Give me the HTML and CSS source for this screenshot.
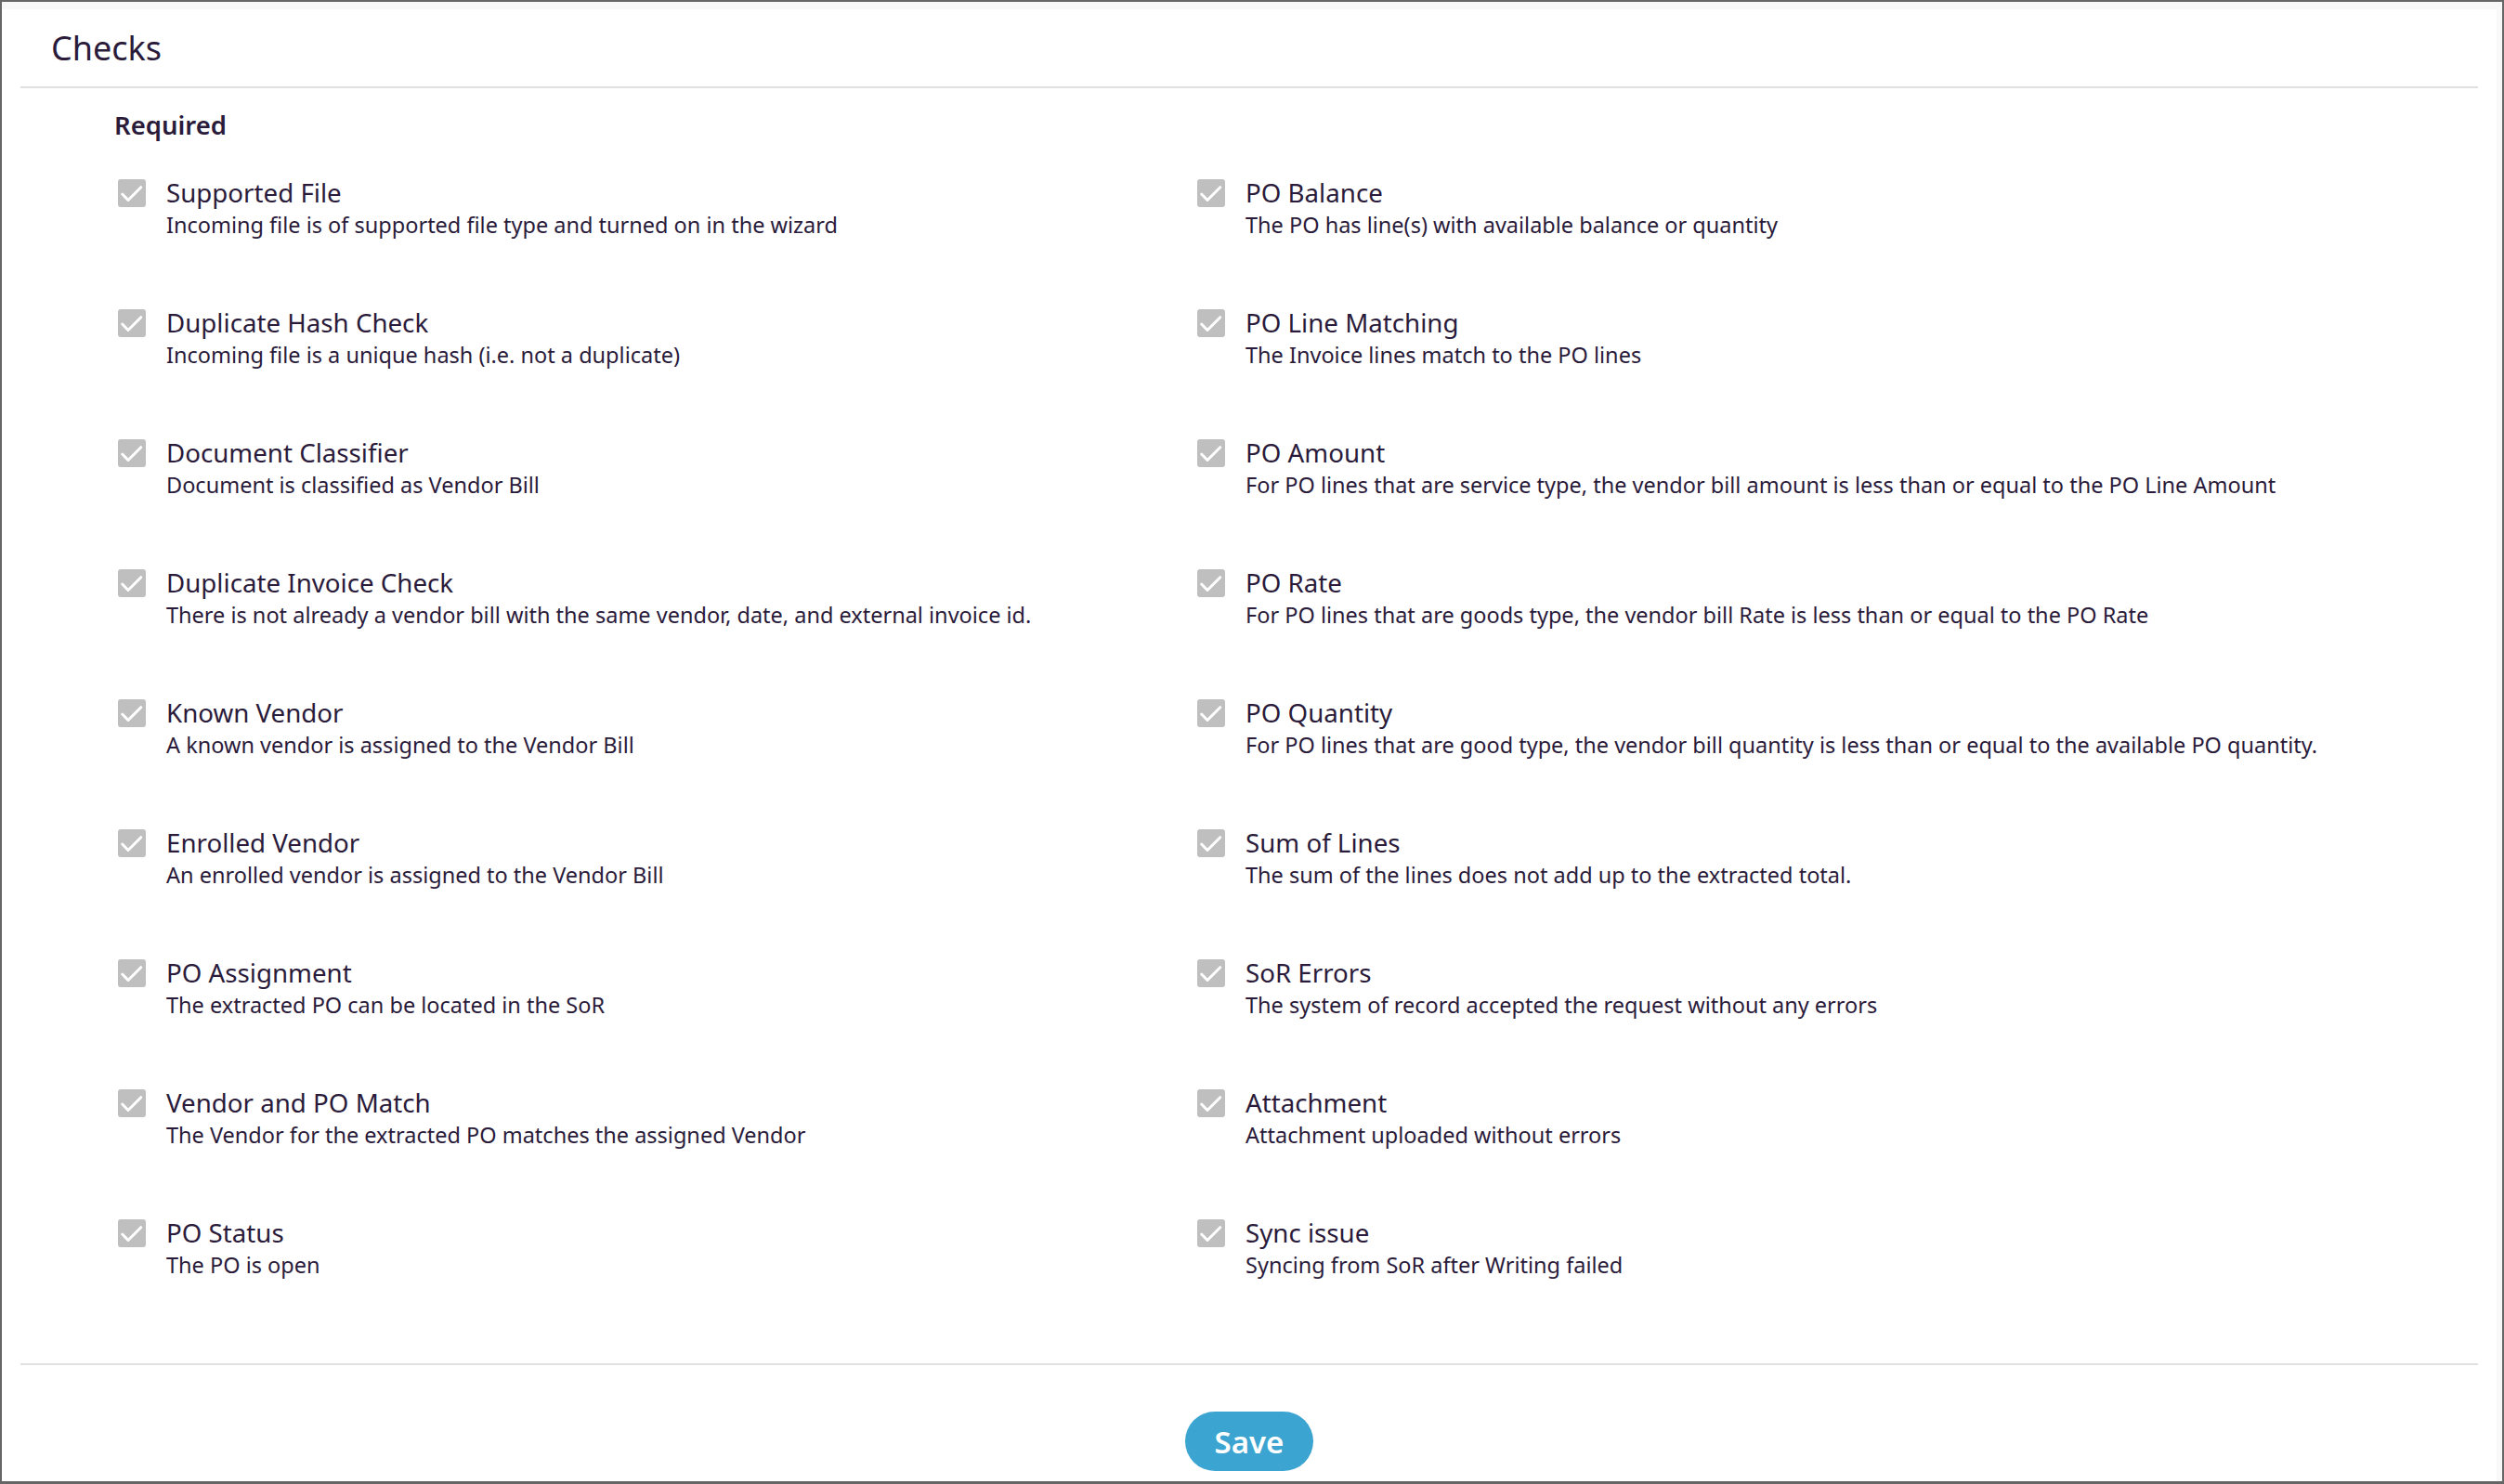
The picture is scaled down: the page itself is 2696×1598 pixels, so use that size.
FILE: index.html
```html
<!DOCTYPE html>
<html lang="en">
<head>
<meta charset="utf-8">
<title>Checks</title>
<link rel="stylesheet" href="styles.css">
</head>
<body>
<div class="frame">
  <div class="panel">
    <div class="header"><h1 class="title">Checks</h1></div>
    <div class="content">
      <h2 class="section">Required</h2>
      <div class="grid">
        <div class="check"><span class="box"><svg viewBox="0 0 30 30"><polyline points="4.7,16 11,22.5 24.7,8.7"/></svg></span><div class="text"><div class="name">Supported File</div><div class="desc">Incoming file is of supported file type and turned on in the wizard</div></div></div>
        <div class="check"><span class="box"><svg viewBox="0 0 30 30"><polyline points="4.7,16 11,22.5 24.7,8.7"/></svg></span><div class="text"><div class="name">PO Balance</div><div class="desc">The PO has line(s) with available balance or quantity</div></div></div>
        <div class="check"><span class="box"><svg viewBox="0 0 30 30"><polyline points="4.7,16 11,22.5 24.7,8.7"/></svg></span><div class="text"><div class="name">Duplicate Hash Check</div><div class="desc">Incoming file is a unique hash (i.e. not a duplicate)</div></div></div>
        <div class="check"><span class="box"><svg viewBox="0 0 30 30"><polyline points="4.7,16 11,22.5 24.7,8.7"/></svg></span><div class="text"><div class="name">PO Line Matching</div><div class="desc">The Invoice lines match to the PO lines</div></div></div>
        <div class="check"><span class="box"><svg viewBox="0 0 30 30"><polyline points="4.7,16 11,22.5 24.7,8.7"/></svg></span><div class="text"><div class="name">Document Classifier</div><div class="desc">Document is classified as Vendor Bill</div></div></div>
        <div class="check"><span class="box"><svg viewBox="0 0 30 30"><polyline points="4.7,16 11,22.5 24.7,8.7"/></svg></span><div class="text"><div class="name">PO Amount</div><div class="desc">For PO lines that are service type, the vendor bill amount is less than or equal to the PO Line Amount</div></div></div>
        <div class="check"><span class="box"><svg viewBox="0 0 30 30"><polyline points="4.7,16 11,22.5 24.7,8.7"/></svg></span><div class="text"><div class="name">Duplicate Invoice Check</div><div class="desc">There is not already a vendor bill with the same vendor, date, and external invoice id.</div></div></div>
        <div class="check"><span class="box"><svg viewBox="0 0 30 30"><polyline points="4.7,16 11,22.5 24.7,8.7"/></svg></span><div class="text"><div class="name">PO Rate</div><div class="desc">For PO lines that are goods type, the vendor bill Rate is less than or equal to the PO Rate</div></div></div>
        <div class="check"><span class="box"><svg viewBox="0 0 30 30"><polyline points="4.7,16 11,22.5 24.7,8.7"/></svg></span><div class="text"><div class="name">Known Vendor</div><div class="desc">A known vendor is assigned to the Vendor Bill</div></div></div>
        <div class="check"><span class="box"><svg viewBox="0 0 30 30"><polyline points="4.7,16 11,22.5 24.7,8.7"/></svg></span><div class="text"><div class="name">PO Quantity</div><div class="desc">For PO lines that are good type, the vendor bill quantity is less than or equal to the available PO quantity.</div></div></div>
        <div class="check"><span class="box"><svg viewBox="0 0 30 30"><polyline points="4.7,16 11,22.5 24.7,8.7"/></svg></span><div class="text"><div class="name">Enrolled Vendor</div><div class="desc">An enrolled vendor is assigned to the Vendor Bill</div></div></div>
        <div class="check"><span class="box"><svg viewBox="0 0 30 30"><polyline points="4.7,16 11,22.5 24.7,8.7"/></svg></span><div class="text"><div class="name">Sum of Lines</div><div class="desc">The sum of the lines does not add up to the extracted total.</div></div></div>
        <div class="check"><span class="box"><svg viewBox="0 0 30 30"><polyline points="4.7,16 11,22.5 24.7,8.7"/></svg></span><div class="text"><div class="name">PO Assignment</div><div class="desc">The extracted PO can be located in the SoR</div></div></div>
        <div class="check"><span class="box"><svg viewBox="0 0 30 30"><polyline points="4.7,16 11,22.5 24.7,8.7"/></svg></span><div class="text"><div class="name">SoR Errors</div><div class="desc">The system of record accepted the request without any errors</div></div></div>
        <div class="check"><span class="box"><svg viewBox="0 0 30 30"><polyline points="4.7,16 11,22.5 24.7,8.7"/></svg></span><div class="text"><div class="name">Vendor and PO Match</div><div class="desc">The Vendor for the extracted PO matches the assigned Vendor</div></div></div>
        <div class="check"><span class="box"><svg viewBox="0 0 30 30"><polyline points="4.7,16 11,22.5 24.7,8.7"/></svg></span><div class="text"><div class="name">Attachment</div><div class="desc">Attachment uploaded without errors</div></div></div>
        <div class="check"><span class="box"><svg viewBox="0 0 30 30"><polyline points="4.7,16 11,22.5 24.7,8.7"/></svg></span><div class="text"><div class="name">PO Status</div><div class="desc">The PO is open</div></div></div>
        <div class="check"><span class="box"><svg viewBox="0 0 30 30"><polyline points="4.7,16 11,22.5 24.7,8.7"/></svg></span><div class="text"><div class="name">Sync issue</div><div class="desc">Syncing from SoR after Writing failed</div></div></div>
      </div>
    </div>
    <div class="footer"><button class="save" type="button">Save</button></div>
  </div>
</div>
</body>
</html>
```

FILE: styles.css
```css
* { box-sizing: border-box; }
html, body { margin: 0; padding: 0; }
body {
  font-family: "Noto Sans", "Open Sans", "DejaVu Sans", sans-serif;
  color: #2b1b3b;
}
.frame {
  width: 2696px;
  height: 1598px;
  border: 2px solid #666666;
  border-bottom-width: 3px;
  background: #f8f8f8;
  padding: 8px 6px 0 0;
  overflow: hidden;
}
.panel {
  background: #ffffff;
  height: 100%;
  display: flex;
  flex-direction: column;
}
.header {
  margin: 0 20px;
  padding: 18px 33px 17px;
  border-bottom: 2px solid #e0e0e0;
}
.title {
  margin: 0;
  font-size: 36px;
  line-height: 48px;
  font-weight: 400;
}
.content {
  margin: 0 20px;
  padding: 23px 0 0 101px;
  height: 1375px;
  border-bottom: 2px solid #e0e0e0;
}
.section {
  margin: 0;
  font-size: 27.5px;
  line-height: 34px;
  font-weight: 600;
}
.grid {
  margin-top: 37px;
  display: grid;
  grid-template-columns: 1162px 1fr;
  row-gap: 70px;
}
.check {
  display: flex;
  align-items: flex-start;
  gap: 22px;
  padding-left: 4px;
}
.box {
  flex: none;
  width: 30px;
  height: 30px;
  margin-top: 4px;
  border-radius: 3px;
  background: #bfbfbf;
  display: block;
}
.box svg {
  width: 30px;
  height: 30px;
  display: block;
  fill: none;
  stroke: #ffffff;
  stroke-width: 3;
  stroke-linecap: round;
  stroke-linejoin: round;
}
.name {
  font-size: 27.7px;
  line-height: 36px;
}
.desc {
  font-size: 23.5px;
  line-height: 34px;
}
.footer {
  display: flex;
  justify-content: center;
  padding-top: 50px;
}
.save {
  width: 138px;
  height: 64px;
  border: none;
  border-radius: 32px;
  background: #3ca4d1;
  color: #ffffff;
  font-family: "Noto Sans", "Open Sans", sans-serif;
  font-size: 33px;
  font-weight: 600;
  padding: 0;
}
```
